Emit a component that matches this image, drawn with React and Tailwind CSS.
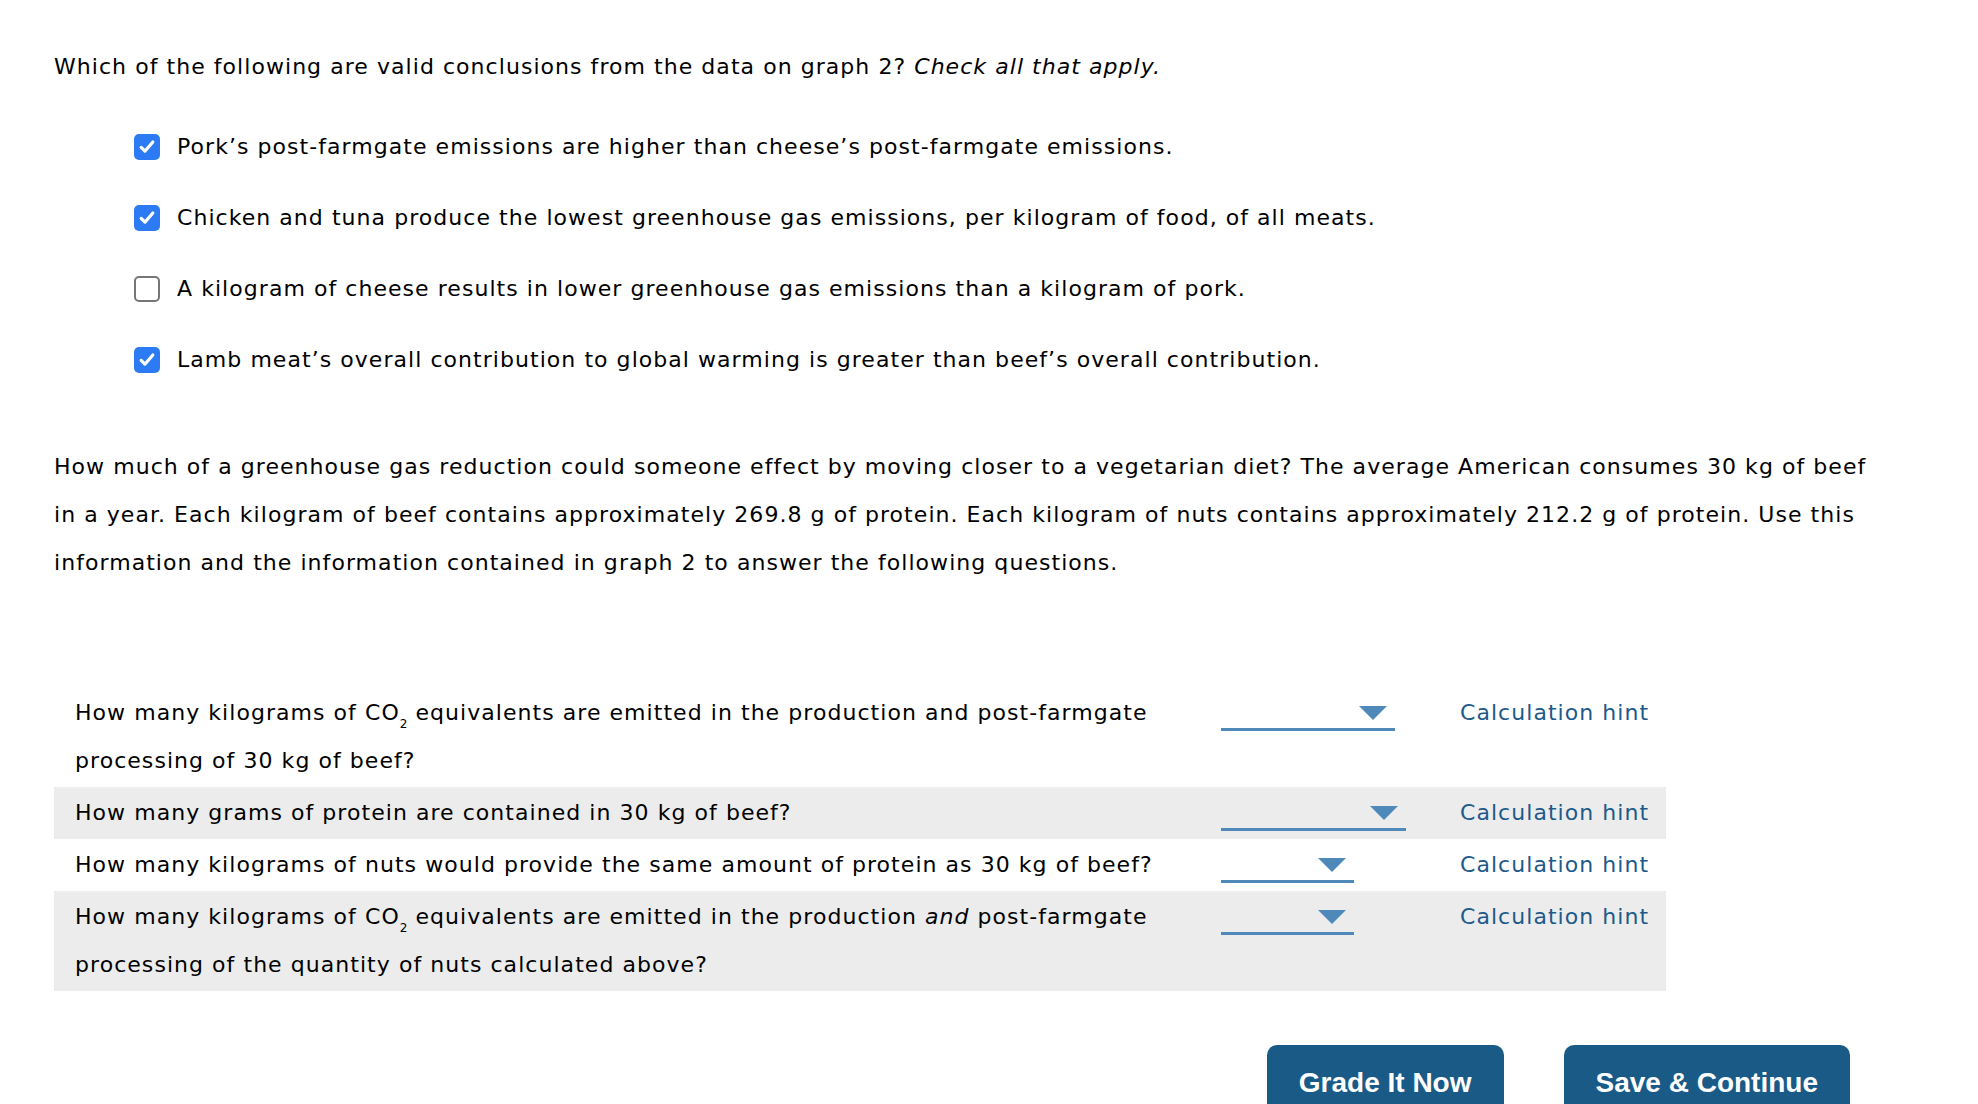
import React from 'react';

const conclusions = [
    { text: 'Pork’s post-farmgate emissions are higher than cheese’s post-farmgate emissions.', checked: true },
    { text: 'Chicken and tuna produce the lowest greenhouse gas emissions, per kilogram of food, of all meats.', checked: true },
    { text: 'A kilogram of cheese results in lower greenhouse gas emissions than a kilogram of pork.', checked: false },
    { text: 'Lamb meat’s overall contribution to global warming is greater than beef’s overall contribution.', checked: true },
];

const Co2 = () => (
    <>
        CO<span className="relative top-[8px] text-[12px] leading-none tracking-normal">2</span>
    </>
);

const Checkbox = ({ checked }) =>
    checked ? (
        <div className="w-[26px] h-[26px] rounded-[5px] bg-[#2c7bf4] flex items-center justify-center shrink-0">
            <svg viewBox="0 0 24 24" className="w-[20px] h-[20px]" fill="none" stroke="white" strokeWidth={3.8} strokeLinecap="round" strokeLinejoin="round">
                <path d="M5 12.5l4.5 4.5L19 6" />
            </svg>
        </div>
    ) : (
        <div className="w-[26px] h-[26px] rounded-[5px] border-2 border-[#767676] bg-white shrink-0" />
    );

// dropdown with blue underline + triangle
const Dropdown = ({ width }) => (
    <div className={`${width} h-[42px] border-b-[3px] border-[#4f89ba] flex justify-end items-start pt-[17px] pr-[8px]`}>
        <svg viewBox="0 0 28 14" className="w-[28px] h-[14px]">
            <path d="M0 0H28L14 14Z" fill="#4f89ba" />
        </svg>
    </div>
);

const rows = [
    {
        q: (
            <>
                How many kilograms of <Co2 /> equivalents are emitted in the production and post-farmgate processing of 30 kg of beef?
            </>
        ),
        w: 'w-[174px]',
        grey: false,
    },
    { q: 'How many grams of protein are contained in 30 kg of beef?', w: 'w-[185px]', grey: true },
    { q: 'How many kilograms of nuts would provide the same amount of protein as 30 kg of beef?', w: 'w-[133px]', grey: false },
    {
        q: (
            <>
                How many kilograms of <Co2 /> equivalents are emitted in the production <em>and</em> post-farmgate processing of the quantity of nuts calculated above?
            </>
        ),
        w: 'w-[133px]',
        grey: true,
    },
];

export default function App() {
    return (
        <div className="w-full h-[1104px] overflow-hidden bg-white text-black text-[22px] tracking-[1.05px] font-['DejaVu_Sans',sans-serif]">
            <div className="pl-[54px] pt-[43px]">
                <p className="leading-[48px]">
                    Which of the following are valid conclusions from the data on graph 2? <em>Check all that apply.</em>
                </p>

                <div className="mt-[20px] ml-[80px]">
                    {conclusions.map((c, i) => (
                        <div key={i} className="h-[71px] flex items-center gap-[17px]">
                            <Checkbox checked={c.checked} />
                            <span>{c.text}</span>
                        </div>
                    ))}
                </div>

                <p className="mt-[48px] w-[1828px] leading-[48px]">
                    How much of a greenhouse gas reduction could someone effect by moving closer to a vegetarian diet? The average American consumes 30 kg of beef in a year. Each kilogram of beef contains approximately 269.8 g of protein. Each kilogram of nuts contains approximately 212.2 g of protein. Use this information and the information contained in graph 2 to answer the following questions.
                </p>

                <div className="mt-[100px] w-[1612px]">
                    {rows.map((r, i) => (
                        <div
                            key={i}
                            className={`grid grid-cols-[1167px_239px_1fr] py-[2px] leading-[48px] ${r.grey ? 'bg-[#ececec]' : ''}`}
                        >
                            <div className="pl-[21px] pr-[20px]">{r.q}</div>
                            <div>
                                <Dropdown width={r.w} />
                            </div>
                            <div className="text-[#1d5a8a] whitespace-nowrap">Calculation hint</div>
                        </div>
                    ))}
                </div>

                <div className="mt-[54px] w-[1796px] flex justify-end gap-[60px] tracking-normal">
                    <button className="h-[80px] px-[32px] pt-[24px] leading-[28px] self-start bg-[#1a5a87] rounded-t-[10px] text-white font-bold text-[28px] font-['Liberation_Sans',Arial,sans-serif] flex items-start">
                        Grade It Now
                    </button>
                    <button className="h-[80px] px-[32px] pt-[24px] leading-[28px] self-start bg-[#1a5a87] rounded-t-[10px] text-white font-bold text-[28px] font-['Liberation_Sans',Arial,sans-serif] flex items-start">
                        Save &amp; Continue
                    </button>
                </div>
            </div>
        </div>
    );
}
